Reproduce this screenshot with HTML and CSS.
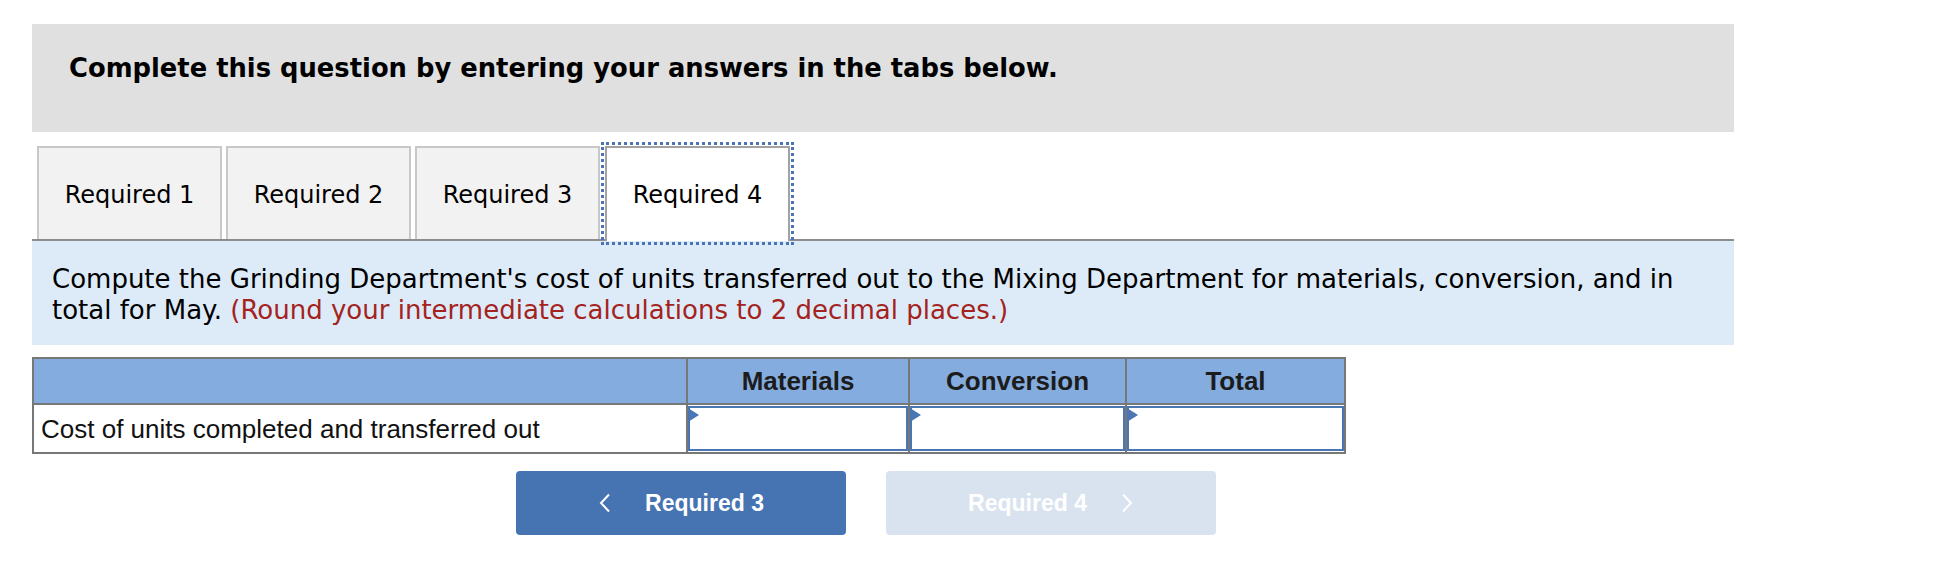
FILE: index.html
```html
<!DOCTYPE html>
<html lang="en">
<head>
<meta charset="utf-8">
<title>Required 4</title>
<link rel="stylesheet" href="styles.css">
</head>
<body>
<div class="page">
  <div class="banner">Complete this question by entering your answers in the tabs below.</div>

  <div class="tabs">
    <div class="tab">Required 1</div>
    <div class="tab">Required 2</div>
    <div class="tab">Required 3</div>
    <div class="tab active">Required 4</div>
  </div>

  <div class="prompt">
    <p class="line">Compute the Grinding Department's cost of units transferred out to the Mixing Department for materials, conversion, and in</p>
    <p class="line">total for May. <span class="hint">(Round your intermediate calculations to 2 decimal places.)</span></p>
  </div>

  <table class="grid">
    <colgroup>
      <col class="c-label">
      <col class="c-num">
      <col class="c-num2">
      <col class="c-num3">
    </colgroup>
    <thead>
      <tr>
        <th></th>
        <th>Materials</th>
        <th>Conversion</th>
        <th>Total</th>
      </tr>
    </thead>
    <tbody>
      <tr>
        <td class="label">Cost of units completed and transferred out</td>
        <td class="entry"><input type="text" aria-label="Materials"></td>
        <td class="entry"><input type="text" aria-label="Conversion"></td>
        <td class="entry"><input type="text" aria-label="Total"></td>
      </tr>
    </tbody>
  </table>

  <div class="nav">
    <button class="navbtn prev" type="button">
      <svg class="chev" width="14" height="20" viewBox="0 0 14 20" aria-hidden="true"><polyline points="11,1.5 3,10 11,18.5" fill="none" stroke="#ffffff" stroke-width="2"/></svg>
      <span>Required 3</span>
    </button>
    <button class="navbtn next" type="button">
      <span>Required 4</span>
      <svg class="chev" width="14" height="20" viewBox="0 0 14 20" aria-hidden="true"><polyline points="3,1.5 11,10 3,18.5" fill="none" stroke="#ffffff" stroke-width="2"/></svg>
    </button>
  </div>
</div>
</body>
</html>
```

FILE: styles.css
```css
html, body {
  margin: 0;
  padding: 0;
  background: #ffffff;
}

.page {
  margin: 24px 0 0 32px;
  width: 1702px;
  font-family: "DejaVu Sans", Verdana, sans-serif;
  color: #000000;
}

.banner {
  box-sizing: border-box;
  height: 108px;
  background: #e0e0e0;
  padding: 30px 0 0 37px;
  font-weight: bold;
  font-size: 25.8px;
  line-height: 28px;
}

.tabs {
  display: flex;
  align-items: flex-end;
  gap: 4px;
  margin-top: 14px;
  padding-left: 5px;
  border-bottom: 2px solid #8c8c8c;
  height: 93px;
}

.tab {
  box-sizing: border-box;
  width: 185px;
  height: 93px;
  display: flex;
  align-items: center;
  justify-content: center;
  background: #f2f2f2;
  border: 2px solid #c8c8c8;
  border-bottom: none;
  font-size: 24px;
  padding-top: 2px;
}

.tab.active {
  background: #ffffff;
  border-color: #a2a2a2;
  height: 95px;
  margin-bottom: -2px;
  margin-left: 1px;
  outline: 3px dotted #4a74b8;
  outline-offset: 1px;
  padding-bottom: 2px;
}

.prompt {
  background: #ddebf8;
  padding: 23px 20px 19px 20px;
  font-size: 26px;
  line-height: 31px;
}

.prompt .line {
  margin: 0;
  white-space: nowrap;
}

.hint {
  color: #a4231e;
}

.grid {
  margin-top: 12px;
  width: 1312px;
  border-collapse: collapse;
  table-layout: fixed;
  border: 2px solid #777777;
  font-family: "Liberation Sans", Arial, Helvetica, sans-serif;
}

.c-label { width: 654px; }
.c-num { width: 222px; }
.c-num2 { width: 217px; }
.c-num3 { width: 219px; }

.grid th {
  background: #84acdf;
  border: 2px solid #777777;
  height: 44px;
  padding: 0;
  font-size: 26px;
  font-weight: bold;
  color: #1c1c1c;
  text-align: center;
}

.grid td {
  border: 2px solid #777777;
  padding: 0;
  height: 45px;
}

.grid td.label {
  padding-left: 7px;
  padding-top: 2px;
  font-size: 26px;
  color: #111111;
}

.grid td.entry {
  position: relative;
}

.grid td.entry::before {
  content: "";
  position: absolute;
  left: 0;
  top: 3px;
  width: 0;
  height: 0;
  border-left: 11px solid #4a76b4;
  border-top: 7px solid transparent;
  border-bottom: 7px solid transparent;
}

.grid input {
  display: block;
  box-sizing: border-box;
  width: 100%;
  height: 45px;
  margin: 0;
  border: 2px solid #4a76b4;
  background: #ffffff;
  outline: none;
}

.nav {
  display: flex;
  gap: 40px;
  margin-top: 17px;
  padding-left: 484px;
}

.navbtn {
  box-sizing: border-box;
  width: 330px;
  height: 64px;
  border: none;
  border-radius: 4px;
  display: flex;
  align-items: center;
  justify-content: center;
  gap: 33px;
  font-family: "Liberation Sans", Arial, Helvetica, sans-serif;
  font-weight: bold;
  font-size: 23px;
  color: #ffffff;
  padding: 0;
}

.navbtn.prev {
  background: #4674b3;
}

.navbtn.next {
  background: #d9e3ef;
}

.chev {
  display: block;
}
```
